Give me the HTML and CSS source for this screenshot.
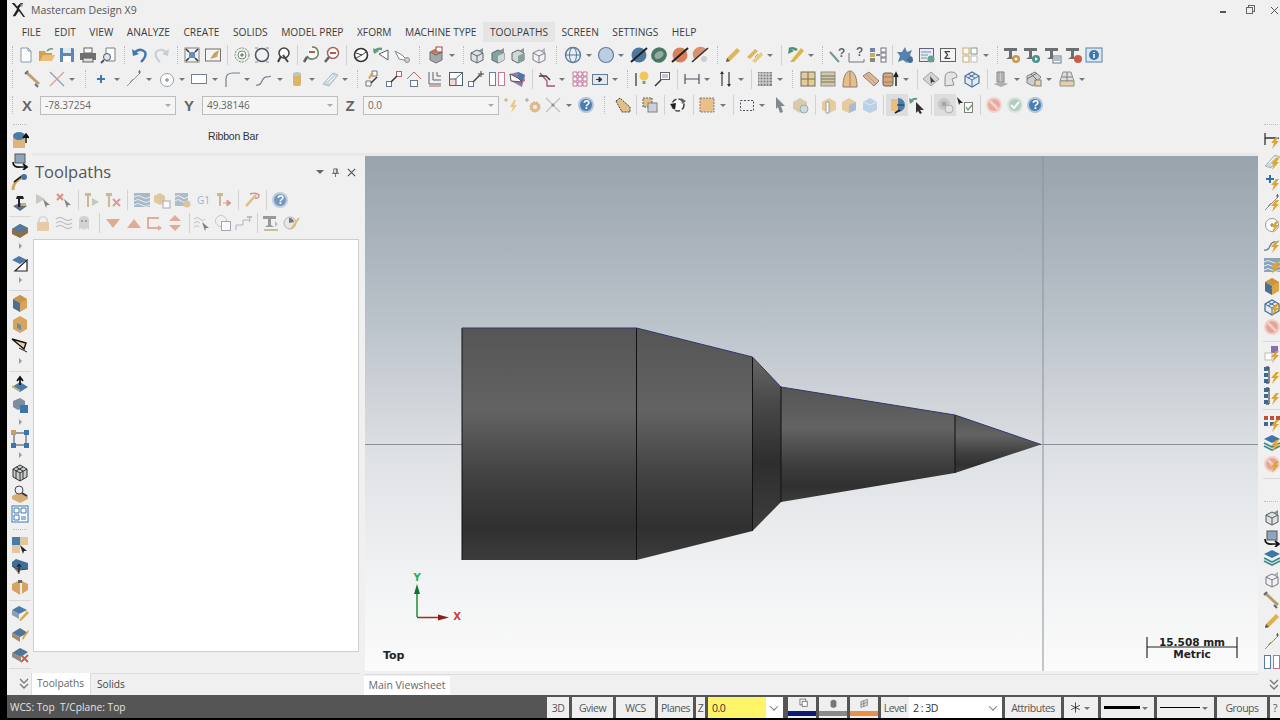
FILE: index.html
```html
<!DOCTYPE html>
<html lang="en">
<head>
    <meta charset="utf-8">
    <title>Mastercam Design X9</title>
    <link rel="stylesheet" href="styles.css">
</head>
<body>
<svg class="defs" aria-hidden="true">
    <symbol id="logo" viewBox="0 0 18 18"><path d="M2 1l6 7-5 8h3l4-6 5 7h2L10 7l5-6h-3L8 5 5 1z" fill="#222"/><path d="M11 3l3-2v5z" fill="#888"/></symbol>
    <symbol id="new" viewBox="0 0 18 18"><path d="M4 2h7l3 3v11H4z" fill="#fff" stroke="#7f93a6"/><path d="M11 2v3h3" fill="none" stroke="#7f93a6"/></symbol>
    <symbol id="open" viewBox="0 0 18 18"><path d="M1 5h6l1 2h6v8H1z" fill="#d19a45"/><path d="M2 15l3-6h12l-3 6z" fill="#eeb96b"/><path d="M9 5q3-3 6-2" fill="none" stroke="#5d9a6c" stroke-width="1.6"/></symbol>
    <symbol id="save" viewBox="0 0 18 18"><path d="M2 2h13l1 1v13H2z" fill="#4f7fb5"/><rect x="5" y="2" width="8" height="5" fill="#dfe8f2"/><rect x="5" y="10" width="8" height="6" fill="#fff"/></symbol>
    <symbol id="print" viewBox="0 0 18 18"><rect x="5" y="2" width="8" height="5" fill="#fff" stroke="#555"/><rect x="1" y="7" width="16" height="7" fill="#666"/><rect x="4" y="12" width="10" height="4" fill="#ddd" stroke="#555"/></symbol>
    <symbol id="prev" viewBox="0 0 18 18"><path d="M6 2h9v13H6z" fill="#fff" stroke="#777"/><circle cx="7" cy="11" r="3.5" fill="#dbe6ef" stroke="#445"/><path d="M4 14l-3 3" stroke="#445" stroke-width="2"/></symbol>
    <symbol id="undo" viewBox="0 0 18 18"><path d="M3 7q6-6 11-1 2 4-4 10" fill="none" stroke="#2f6fa8" stroke-width="2.4"/><path d="M1 3l1 7 6-2z" fill="#2f6fa8"/></symbol>
    <symbol id="redo" viewBox="0 0 18 18"><path d="M15 7q-6-6-11-1-2 4 4 10" fill="none" stroke="#c3ccd3" stroke-width="2"/><path d="M17 3l-1 7-6-2z" fill="#c3ccd3"/></symbol>
    <symbol id="fit" viewBox="0 0 18 18"><rect x="2" y="2" width="14" height="14" fill="#f2f2f2" stroke="#777"/><path d="M3 3l3 3M15 3l-3 3M3 15l3-3M15 15l-3-3" stroke="#222" stroke-width="1.500"/><rect x="6" y="6" width="6" height="6" fill="#5d86b0"/></symbol>
    <symbol id="zwin" viewBox="0 0 18 18"><rect x="1.500" y="3" width="15" height="12" fill="#f5f5f5" stroke="#666"/><path d="M6 13l4-6 5-3-2 7z" fill="#c89a55"/></symbol>
    <symbol id="ztar" viewBox="0 0 18 18"><circle cx="9" cy="9" r="7" fill="#eee" stroke="#777" stroke-dasharray="2 1"/><circle cx="9" cy="9" r="4" fill="#fff" stroke="#5a8a5a"/><path d="M7 9h4M9 7v4" stroke="#555"/></symbol>
    <symbol id="zcir" viewBox="0 0 18 18"><circle cx="9" cy="9" r="6.500" fill="#eef1f3" stroke="#445" stroke-width="1.500"/><path d="M2 2h3M13 2h3M2 16h3M13 16h3" stroke="#888"/></symbol>
    <symbol id="zarr" viewBox="0 0 18 18"><circle cx="10" cy="7" r="5" fill="#fff" stroke="#333" stroke-width="1.500"/><path d="M7 10l-3 6M9 9l5 7" stroke="#333" stroke-width="2"/></symbol>
    <symbol id="zout" viewBox="0 0 18 18"><path d="M10 1a6 6 0 1 1-5 9" fill="#fff" stroke="#557a55" stroke-width="1.500"/><path d="M7 6h6" stroke="#b0503c" stroke-width="2"/><path d="M5 11l-3 5" stroke="#555" stroke-width="2.500"/></symbol>
    <symbol id="zin" viewBox="0 0 18 18"><circle cx="10" cy="7" r="5.500" fill="#fff" stroke="#a05a50" stroke-width="1.500"/><path d="M7 7h6" stroke="#b0503c" stroke-width="2"/><path d="M6 11l-4 5" stroke="#555" stroke-width="2.500"/></symbol>
    <symbol id="rot" viewBox="0 0 18 18"><circle cx="9" cy="9" r="6.500" fill="#fff" stroke="#222" stroke-width="1.600"/><path d="M4 7l6 2-6 3M10 9l4-3" stroke="#333" fill="none"/></symbol>
    <symbol id="gback" viewBox="0 0 18 18"><path d="M16 4l-9 4 9 6z" fill="#fff" stroke="#456"/><path d="M2 6q3-4 8-3" fill="none" stroke="#4f9a78" stroke-width="2.500"/><path d="M1 2l1 6 5-3z" fill="#4f9a78"/></symbol>
    <symbol id="gnext" viewBox="0 0 18 18"><path d="M2 5l7 4 6 6-9-2z" fill="#fff" stroke="#68809a"/><circle cx="14" cy="14" r="2.500" fill="#ccc" stroke="#888"/></symbol>
    <symbol id="cubered" viewBox="0 0 18 18"><path d="M3 6l6-3 6 3v8l-6 3-6-3z" fill="#9ca3a3" stroke="#666"/><path d="M3 6l6 3 6-3" fill="none" stroke="#555"/><rect x="9" y="1" width="6" height="5" fill="#fff" stroke="#a33"/><path d="M3 6l6-3 2 2-4 3z" fill="#c96a44"/></symbol>
    <symbol id="cube1" viewBox="0 0 18 18"><path d="M3 7l6-3 6 3v7l-6 3-6-3z" fill="#dfe3e0" stroke="#556"/><path d="M3 7l6 3 6-3M9 10v7" fill="none" stroke="#556"/><path d="M10 5l5-3v4z" fill="#7b8f97"/></symbol>
    <symbol id="cube2" viewBox="0 0 18 18"><path d="M3 7l6-3 6 3v7l-6 3-6-3z" fill="#7d9c94" stroke="#556"/><path d="M9 10v7l6-3V7z" fill="#cfd8d4"/><path d="M10 5l5-3v4z" fill="#7b8f97"/></symbol>
    <symbol id="cube3" viewBox="0 0 18 18"><path d="M3 7l6-3 6 3v7l-6 3-6-3z" fill="#cfd8d4" stroke="#556"/><path d="M9 10v7l6-3V7z" fill="#7d9c94"/><path d="M10 5l5-3v4z" fill="#7b8f97"/></symbol>
    <symbol id="cube4" viewBox="0 0 18 18"><path d="M3 7l6-3 6 3v7l-6 3-6-3z" fill="#f2f2f2" stroke="#778"/><path d="M3 7l6 3 6-3M9 10v7" fill="none" stroke="#778"/><path d="M10 5l5-3v4z" fill="#a5b0b5"/></symbol>
    <symbol id="globe" viewBox="0 0 18 18"><circle cx="9" cy="9" r="7.500" fill="#e8edf3" stroke="#4d6f91" stroke-width="1.400"/><ellipse cx="9" cy="9" rx="3.500" ry="7.500" fill="none" stroke="#4d6f91"/><path d="M2 9h14" stroke="#4d6f91"/></symbol>
    <symbol id="sphere" viewBox="0 0 18 18"><circle cx="9" cy="9" r="7.500" fill="#b6cbe0" stroke="#55779a" stroke-width="1.200"/></symbol>
    <symbol id="pl1" viewBox="0 0 18 18"><circle cx="9" cy="9" r="7.500" fill="#3f6e9c"/><path d="M1 16L17 2" stroke="#111" stroke-width="2"/></symbol>
    <symbol id="pl2" viewBox="0 0 18 18"><ellipse cx="9" cy="9" rx="8" ry="7.500" fill="#3b6e5c" transform="rotate(-35 9 9)"/><ellipse cx="9" cy="9" rx="5" ry="3.500" fill="#8fa59a" transform="rotate(-35 9 9)"/></symbol>
    <symbol id="pl3" viewBox="0 0 18 18"><circle cx="9" cy="9" r="7.500" fill="#d5784f"/><path d="M1 16L17 2" stroke="#111" stroke-width="2"/></symbol>
    <symbol id="pl4" viewBox="0 0 18 18"><path d="M4 14A7.500 7.500 0 0 1 15 3z" fill="#d98a68"/><path d="M1 16L17 2" stroke="#222" stroke-width="1.600"/><circle cx="13" cy="13" r="3" fill="#ccc"/></symbol>
    <symbol id="pen" viewBox="0 0 18 18"><path d="M2 16l1-4L13 2l3 3L6 15z" fill="#dfb14d"/><path d="M2 16l1-4 3 3z" fill="#555"/></symbol>
    <symbol id="pens" viewBox="0 0 18 18"><path d="M1 11l8-8 3 2-8 8z" fill="#dfb14d"/><path d="M6 15l9-9 2 3-8 8z" fill="#e9c67c"/><path d="M9 11l3-3" stroke="#999"/></symbol>
    <symbol id="fix" viewBox="0 0 18 18"><path d="M3 16L14 2l3 3L7 16z" fill="#d9b13c"/><path d="M2 3q4-2 8 1" fill="none" stroke="#3f8a6a" stroke-width="2.500"/><path d="M1 8l1-6 5 3z" fill="#3f8a6a"/></symbol>
    <symbol id="chk" viewBox="0 0 18 18"><path d="M2 6l9 10" stroke="#66908a" stroke-width="2"/><text x="10" y="11" class="ictext">?</text></symbol>
    <symbol id="dimq" viewBox="0 0 18 18"><path d="M1 7v9h15V13" fill="none" stroke="#667"/><text x="8" y="10" class="ictext">?</text></symbol>
    <symbol id="flow" viewBox="0 0 18 18"><rect x="1" y="2" width="5" height="4" fill="#5d7fa5"/><rect x="1" y="7" width="5" height="4" fill="#c8a35a"/><rect x="1" y="12" width="5" height="4" fill="#77856f"/><rect x="12" y="2" width="5" height="4" fill="#fff" stroke="#667"/><rect x="12" y="7" width="5" height="4" fill="#fff" stroke="#667"/><rect x="12" y="12" width="5" height="4" fill="#fff" stroke="#667"/><path d="M7 9h4" stroke="#357" stroke-width="1.500"/></symbol>
    <symbol id="puzzle" viewBox="0 0 18 18"><path d="M9 1l2 5 5-2-2 5 3 3-5 1-1 4-4-3-5 2 2-6-3-4 5 0z" fill="#4a7aa8"/><circle cx="14" cy="14" r="3" fill="#38648e"/></symbol>
    <symbol id="listr" viewBox="0 0 18 18"><rect x="1.500" y="2.500" width="14" height="13" fill="#e6edf2" stroke="#557"/><path d="M3 6h10M3 9h7M3 12h6" stroke="#6f8aa0"/><circle cx="13" cy="13" r="3.500" fill="#5e9a92"/></symbol>
    <symbol id="sigma" viewBox="0 0 18 18"><rect x="1.500" y="2.500" width="15" height="13" fill="#f5f5f5" stroke="#555"/><text x="5" y="13" class="ictext sig">Σ</text></symbol>
    <symbol id="grid4" viewBox="0 0 18 18"><rect x="2" y="2" width="6" height="6" fill="#fff" stroke="#c9a45e"/><rect x="10" y="2" width="6" height="6" fill="#fff" stroke="#7b9a7b"/><rect x="2" y="10" width="6" height="6" fill="#fff" stroke="#c9a45e"/><rect x="10" y="10" width="6" height="6" fill="#fff" stroke="#bbb"/></symbol>
    <symbol id="mac1" viewBox="0 0 18 18"><path d="M1 2h13v3H9v6l3 2H3l3-2V5H1z" fill="#5f6668"/><circle cx="13" cy="13" r="4" fill="#c88f3f"/><circle cx="13" cy="13" r="1.500" fill="#fff"/></symbol>
    <symbol id="mac2" viewBox="0 0 18 18"><path d="M1 2h13v3H9v6l3 2H3l3-2V5H1z" fill="#5f6668"/><circle cx="13" cy="13" r="4" fill="#3e8a82"/><path d="M12 11l3 2-3 2z" fill="#fff"/></symbol>
    <symbol id="mac3" viewBox="0 0 18 18"><path d="M1 2h13v3H9v6l3 2H3l3-2V5H1z" fill="#5f6668"/><rect x="9" y="10" width="8" height="7" fill="#fff" stroke="#5a7088"/><path d="M10 12h6M10 14h6" stroke="#5a7088"/></symbol>
    <symbol id="mac4" viewBox="0 0 18 18"><path d="M1 2h13v3H9v6l3 2H3l3-2V5H1z" fill="#5f6668"/><circle cx="13" cy="13" r="4" fill="#c9503a"/></symbol>
    <symbol id="info" viewBox="0 0 18 18"><rect x="1" y="2" width="16" height="14" fill="#dbe7f0" stroke="#4a7aa0"/><circle cx="9" cy="9" r="5" fill="#2f6ea5"/><path d="M9 8v4M9 6v1" stroke="#fff" stroke-width="1.500"/></symbol>

    <symbol id="wrench" viewBox="0 0 18 18"><path d="M2 2l13 12" stroke="#b59a6e" stroke-width="3"/><path d="M1 4l3-3M11 14l3 3" stroke="#666" stroke-width="2"/></symbol>
    <symbol id="xcut" viewBox="0 0 18 18"><path d="M2 2l14 14" stroke="#8a97a5" stroke-width="1.300"/><path d="M2 16L16 2" stroke="#d49a8c" stroke-width="1.300"/></symbol>
    <symbol id="plus" viewBox="0 0 18 18"><path d="M5 9h8M9 5v8" stroke="#2f6fa8" stroke-width="2"/></symbol>
    <symbol id="line" viewBox="0 0 18 18"><path d="M2 16L14 4" stroke="#8a8f95"/><path d="M5 12l3-3" stroke="#a0b060"/><path d="M13 2h3M14.500 0v4" stroke="#666"/></symbol>
    <symbol id="circ" viewBox="0 0 18 18"><circle cx="9" cy="10" r="6.500" fill="#fff" stroke="#8a9aa8"/><path d="M7 10h4M9 8v4" stroke="#777"/></symbol>
    <symbol id="rect" viewBox="0 0 18 18"><rect x="1.500" y="4.500" width="15" height="9" fill="#fff" stroke="#66788a"/></symbol>
    <symbol id="fil" viewBox="0 0 18 18"><path d="M3 17V9q0-6 7-6h7" fill="none" stroke="#66788a" stroke-width="1.200"/></symbol>
    <symbol id="spl" viewBox="0 0 18 18"><path d="M1 15q4 1 6-4t6-4l3-1" fill="none" stroke="#66788a" stroke-width="1.200"/></symbol>
    <symbol id="cyl" viewBox="0 0 18 18"><rect x="5" y="3" width="8" height="13" rx="2" fill="#dcb15c"/><ellipse cx="9" cy="4" rx="4" ry="2" fill="#b8c2c8"/></symbol>
    <symbol id="surf" viewBox="0 0 18 18"><path d="M2 14L12 3l5 2-9 11z" fill="#cdd7dd" stroke="#a9b4bb"/><path d="M6 11l6-6M8 13l6-6" stroke="#fff"/></symbol>
    <symbol id="ws1" viewBox="0 0 18 18"><path d="M8 1h5v5H8zM2 11h5v5H2z" fill="#fff" stroke="#667"/><path d="M4 8l3-5h3L6 9z" fill="#dfa33a"/><path d="M7 13l6-6" stroke="#222" stroke-width="1.500"/></symbol>
    <symbol id="ws2" viewBox="0 0 18 18"><rect x="1.500" y="11.500" width="5" height="5" fill="#fff" stroke="#5a7088"/><rect x="11.500" y="1.500" width="5" height="5" fill="#fff" stroke="#b05a5a"/><path d="M6 12l6-6" stroke="#222" stroke-width="1.500"/></symbol>
    <symbol id="ws3" viewBox="0 0 18 18"><path d="M2 9l7-7 7 7" fill="none" stroke="#b05a5a"/><rect x="5.500" y="10.500" width="7" height="6" fill="#fff" stroke="#5a7088"/></symbol>
    <symbol id="ws4" viewBox="0 0 18 18"><path d="M3 2v12h12M7 2v8h8M11 2v4h4" fill="none" stroke="#556"/><path d="M3 16h12" stroke="#b05a5a"/></symbol>
    <symbol id="scale" viewBox="0 0 18 18"><rect x="2.500" y="2.500" width="13" height="13" fill="#fff" stroke="#456"/><path d="M2 15L15 3" stroke="#456"/><rect x="2.500" y="9" width="6.500" height="6.500" fill="#f4d9d4" stroke="#456"/></symbol>
    <symbol id="grow" viewBox="0 0 18 18"><rect x="1.500" y="11.500" width="5" height="5" fill="#fff" stroke="#5a7088"/><path d="M6 12l7-7" stroke="#333" stroke-width="1.500"/><path d="M14 1v6M11 4h6" stroke="#333"/></symbol>
    <symbol id="two" viewBox="0 0 18 18"><rect x="1.500" y="2.500" width="6" height="13" fill="#fff" stroke="#5a7aa0"/><rect x="10.500" y="2.500" width="6" height="13" fill="#fff" stroke="#c07090"/></symbol>
    <symbol id="cube3d" viewBox="0 0 18 18"><path d="M2 4l8-2 7 3-3 12-11-6z" fill="#8e6f9e"/><path d="M10 2l7 3-3 7-4-4z" fill="#3d6fa5"/><path d="M2 4l8 4 4 4-11-1z" fill="#fff" stroke="#444"/><path d="M14 12l2-6 1 5z" fill="#d04a6a"/></symbol>
    <symbol id="angle" viewBox="0 0 18 18"><path d="M2 3l7 8v5h8" fill="none" stroke="#9c4a7a" stroke-width="1.300"/><path d="M1 6h7l4 4" fill="none" stroke="#333" stroke-width="1.500"/></symbol>
    <symbol id="dots9" viewBox="0 0 18 18"><path d="M2 2h4v4H2zM7 2h4v4H7zM12 2h4v4h-4zM2 7h4v4H2zM7 7h4v4H7zM12 7h4v4h-4zM2 12h4v4H2zM7 12h4v4H7zM12 12h4v4h-4z" fill="#fff" stroke="#c06a9a"/></symbol>
    <symbol id="boxar" viewBox="0 0 18 18"><rect x="1.500" y="4.500" width="15" height="10" fill="#e3e8ee" stroke="#5a7088"/><path d="M5 9.500h5M8 7l3 2.500L8 12z" stroke="#222" fill="#222"/></symbol>
    <symbol id="bulb" viewBox="0 0 18 18"><path d="M3 3v13" stroke="#445" stroke-width="1.500"/><circle cx="11" cy="6" r="4.500" fill="#f0c44c"/><rect x="9.500" y="11" width="3" height="3" fill="#888"/></symbol>
    <symbol id="note" viewBox="0 0 18 18"><rect x="7.500" y="2.500" width="9" height="7" fill="#fff" stroke="#556"/><path d="M9 5h6M9 7h6" stroke="#889"/><path d="M2 16l6-6" stroke="#222" stroke-width="1.500"/></symbol>
    <symbol id="dimh" viewBox="0 0 18 18"><path d="M2 4v10M16 4v10M2 9h14" stroke="#445" stroke-width="1.200"/></symbol>
    <symbol id="dimv" viewBox="0 0 18 18"><path d="M5 2v14M12 2v14" stroke="#445" stroke-width="1.400"/><path d="M3 4l2-3 2 3M10 14l2 3 2-3" fill="#222"/></symbol>
    <symbol id="hatch" viewBox="0 0 18 18"><rect x="2" y="2" width="14" height="14" fill="#777"/><path d="M2 4h14M2 7h14M2 10h14M2 13h14M4 2v14M7 2v14M10 2v14M13 2v14" stroke="#ddd"/></symbol>
    <symbol id="wf1" viewBox="0 0 18 18"><rect x="2" y="2" width="14" height="14" fill="#e8c88a" stroke="#666"/><path d="M9 2v14M2 9h14" stroke="#666"/></symbol>
    <symbol id="wf2" viewBox="0 0 18 18"><rect x="2" y="2" width="14" height="14" fill="#d2c59c" stroke="#888"/><path d="M2 6h14M2 9h14M2 12h14" stroke="#666"/></symbol>
    <symbol id="dome" viewBox="0 0 18 18"><path d="M2 17C2 7 5 1 9 1s7 6 7 16z" fill="#e8bc7e" stroke="#777"/><path d="M9 1v16" stroke="#a67"/></symbol>
    <symbol id="tile" viewBox="0 0 18 18"><path d="M1 6l6-4 10 9-5 5z" fill="#dfb57c" stroke="#777"/><path d="M4 4l10 10" stroke="#b89"/></symbol>
    <symbol id="cylup" viewBox="0 0 18 18"><rect x="1" y="3" width="10" height="13" rx="2" fill="#dda068" stroke="#555"/><path d="M1 7h10M1 12h10" stroke="#777"/><path d="M14 16V5M12 7l2-4 2 4" stroke="#111" stroke-width="1.500"/></symbol>
    <symbol id="sel1" viewBox="0 0 18 18"><path d="M1 9l8-7 8 7-8 7z" fill="#cfd3d6" stroke="#999"/><path d="M8 6l5 6-3 0-1 2z" fill="#333"/></symbol>
    <symbol id="sel2" viewBox="0 0 18 18"><path d="M3 16V8q0-6 6-6 6 0 6 5l-5 2 2 6z" fill="#e3e3e3" stroke="#888"/></symbol>
    <symbol id="mesh" viewBox="0 0 18 18"><path d="M2 6l7-4 7 4v7l-7 4-7-4z" fill="#e2ebf3" stroke="#3f6a92" stroke-width="1.200"/><path d="M2 6l7 4 7-4M9 10v7M5 4l7 4M12 4L5 8" fill="none" stroke="#3f6a92"/></symbol>
    <symbol id="tow1" viewBox="0 0 18 18"><path d="M5 2h7v10H5z" fill="#ccc" stroke="#777"/><path d="M7 2v10M10 2v10" stroke="#888"/><path d="M2 14l7-3 7 3-7 3z" fill="#aaa"/></symbol>
    <symbol id="tow2" viewBox="0 0 18 18"><path d="M2 6l8-4 6 5-8 9-6-3z" fill="#ccc" stroke="#777"/><path d="M6 4l6 6M2 9l10-6" stroke="#666"/><rect x="10" y="10" width="6" height="6" fill="#e5d5a5" stroke="#777"/></symbol>
    <symbol id="tow3" viewBox="0 0 18 18"><path d="M5 2h8l3 9H2z" fill="#ddd" stroke="#888"/><path d="M2 11h14v5H2z" fill="#e4cfa2" stroke="#888"/><path d="M9 2v9M4 7h10" stroke="#777"/></symbol>

    <symbol id="boltp" viewBox="0 0 18 18"><path d="M1 4h4M3 2v4" stroke="#c8a35a"/><path d="M11 4l-4 7h3l-2 6 6-8h-3l2-5z" fill="#e8c47c"/></symbol>
    <symbol id="cogp" viewBox="0 0 18 18"><path d="M1 4h4M3 2v4" stroke="#999"/><circle cx="11" cy="11" r="5" fill="#e0b880" stroke="#cda56a" stroke-dasharray="2 1"/><circle cx="11" cy="11" r="2" fill="#f0f0f0"/></symbol>
    <symbol id="xstar" viewBox="0 0 18 18"><path d="M2 2l14 14M2 16L16 2" stroke="#bbb" stroke-width="1.200"/><circle cx="9" cy="9" r="1.500" fill="#888"/></symbol>
    <symbol id="help" viewBox="0 0 18 18"><circle cx="9" cy="9" r="8" fill="#a9c2da"/><circle cx="9" cy="9" r="6" fill="#3d74ab"/><text x="6" y="13" class="ictext hw">?</text></symbol>
    <symbol id="sbox" viewBox="0 0 18 18"><path d="M2 5l4-3 10 9v5H8z" fill="#e0bc7d" stroke="#333" stroke-dasharray="2 1"/></symbol>
    <symbol id="stack" viewBox="0 0 18 18"><rect x="2" y="2" width="9" height="9" fill="#e0bc7d" stroke="#555" stroke-dasharray="2 1"/><rect x="7" y="7" width="9" height="9" fill="#ccd" stroke="#777"/></symbol>
    <symbol id="swap" viewBox="0 0 18 18"><circle cx="9" cy="9" r="6" fill="#fff" stroke="#333" stroke-width="1.500" stroke-dasharray="5 2"/><path d="M1 8l6-1-1 7z" fill="#111"/><path d="M12 2l5 3-4 3z" fill="#555"/></symbol>
    <symbol id="dots" viewBox="0 0 18 18"><rect x="2" y="2" width="14" height="14" fill="#e9bd80" stroke="#777" stroke-dasharray="2 1"/></symbol>
    <symbol id="dashr" viewBox="0 0 18 18"><rect x="2.500" y="4.500" width="13" height="10" fill="none" stroke="#445" stroke-dasharray="2 1.500"/></symbol>
    <symbol id="arrow" viewBox="0 0 18 18"><path d="M5 1l9 9-4 0 2 6-3 1-2-6-2 2z" fill="#78808a"/></symbol>
    <symbol id="dimbox" viewBox="0 0 18 18"><path d="M2 6l7-4 7 4v7l-7 4-7-4z" fill="#d8c8a5"/><circle cx="13" cy="13" r="4" fill="#cfd8dc" stroke="#8aa"/></symbol>
    <symbol id="hbox1" viewBox="0 0 18 18"><path d="M2 6l7-4 7 4v8l-7 3-7-3z" fill="#e5c897"/><path d="M6 6h3v11H6z" fill="#fff" stroke="#999"/></symbol>
    <symbol id="hbox2" viewBox="0 0 18 18"><path d="M2 6l7-4 7 4v8l-7 3-7-3z" fill="#e5c897"/><path d="M9 9l7-3v8l-7 3z" fill="#a7b7cf"/></symbol>
    <symbol id="hbox3" viewBox="0 0 18 18"><path d="M2 6l7-4 7 4v8l-7 3-7-3z" fill="#b6d0e6"/><path d="M2 6l7 3 7-3" fill="none" stroke="#d8e6f2"/></symbol>
    <symbol id="half" viewBox="0 0 18 18"><rect x="3" y="3" width="7" height="12" fill="#e8bc70"/><path d="M10 2a7 7 0 0 1 0 14z" fill="#3f74a8"/><path d="M9 9h7" stroke="#222"/><path d="M7 17l5-3" stroke="#111" stroke-width="2"/></symbol>
    <symbol id="bkarr" viewBox="0 0 18 18"><path d="M2 6q3-4 7-3" fill="none" stroke="#4f9a78" stroke-width="2"/><path d="M1 2l1 6 4-3z" fill="#4f9a78"/><path d="M8 6l8 8-4 0 2 3-2 1-2-3-2 2z" fill="#222"/></symbol>
    <symbol id="target" viewBox="0 0 18 18"><circle cx="8" cy="8" r="6" fill="#c4c4c4"/><circle cx="8" cy="8" r="2.500" fill="#a0a0a0"/><circle cx="13" cy="13" r="4" fill="#e4e4e4" stroke="#aaa"/></symbol>
    <symbol id="clip" viewBox="0 0 18 18"><path d="M1 1l6 6-3 0-1 2z" fill="#111"/><rect x="8.500" y="6.500" width="8" height="10" fill="#fff" stroke="#777"/><path d="M10 11l2 3 4-5" stroke="#5c8f5c" fill="none" stroke-width="1.300"/></symbol>
    <symbol id="stop" viewBox="0 0 18 18"><circle cx="9" cy="9" r="8" fill="#f1d2ca"/><circle cx="9" cy="9" r="6" fill="#e8a595"/><path d="M5 5l8 8" stroke="#f5d0c8" stroke-width="2.500"/></symbol>
    <symbol id="ok" viewBox="0 0 18 18"><circle cx="9" cy="9" r="8" fill="#d6e4de"/><circle cx="9" cy="9" r="6" fill="#adc9bc"/><path d="M5 9l3 3 5-6" fill="none" stroke="#fff" stroke-width="2"/></symbol>

    <symbol id="tplay" viewBox="0 0 18 18"><path d="M2 3l9 5-9 5z" fill="#b2bcae"/><path d="M9 8l7 6-3 0-1 3z" fill="#555"/></symbol>
    <symbol id="tx" viewBox="0 0 18 18"><path d="M2 3l6 6M8 3L2 9" stroke="#d06a58" stroke-width="2"/><path d="M9 8l7 6-3 0-1 3z" fill="#555"/></symbol>
    <symbol id="ttool" viewBox="0 0 18 18"><path d="M2 2h6v3H6v11H4V5H2z" fill="#b9a36e"/><path d="M9 7l7 4-7 4z" fill="#a7c0a0"/></symbol>
    <symbol id="ttoolx" viewBox="0 0 18 18"><path d="M2 2h6v3H6v11H4V5H2z" fill="#b9a36e"/><path d="M9 8l7 7M16 8l-7 7" stroke="#d27a68" stroke-width="2"/></symbol>
    <symbol id="wave" viewBox="0 0 18 18"><rect x="1" y="2" width="16" height="14" fill="#8ba3b8"/><path d="M1 6q4-3 8 0t8 0M1 10q4-3 8 0t8 0M1 14q4-3 8 0t8 0" fill="none" stroke="#e6edf3"/></symbol>
    <symbol id="tcube" viewBox="0 0 18 18"><path d="M1 5l6-3 5 3v6l-5 3-6-3z" fill="#d9b77e"/><rect x="10" y="10" width="7" height="7" fill="#fff" stroke="#889"/></symbol>
    <symbol id="wavec" viewBox="0 0 18 18"><rect x="1" y="2" width="13" height="13" fill="#94a8ba"/><path d="M1 6q3-3 6 0t7 0M1 10q3-3 6 0t7 0" fill="none" stroke="#eef"/><circle cx="13" cy="13" r="3.500" fill="#d6b27a"/></symbol>
    <symbol id="tool2" viewBox="0 0 18 18"><path d="M2 2h6v3H6v10H4V5H2z" fill="#b9a36e"/><path d="M8 12h7M12 9l4 3-4 3z" fill="#d1745e" stroke="#d1745e"/></symbol>
    <symbol id="hook" viewBox="0 0 18 18"><path d="M3 15L13 4" stroke="#dba945" stroke-width="2.500"/><path d="M7 3q6-2 9 1 0 4-4 3" fill="none" stroke="#c26a6a" stroke-width="1.500"/></symbol>
    <symbol id="lock" viewBox="0 0 18 18"><rect x="3" y="8" width="12" height="9" rx="1" fill="#e3be88"/><path d="M5 8V5q4-5 8 0v3" fill="none" stroke="#d1d1d1" stroke-width="2"/></symbol>
    <symbol id="waves" viewBox="0 0 18 18"><path d="M1 5q4-3 8 0t8 0M1 9q4-3 8 0t8 0M1 13q4-3 8 0t8 0" fill="none" stroke="#aab3ba" stroke-width="1.300"/></symbol>
    <symbol id="ghost" viewBox="0 0 18 18"><path d="M4 16V6q0-4 5-4t5 4v10l-2-2-3 2-3-2z" fill="#c5c9c9"/><circle cx="7" cy="7" r="1" fill="#666"/><circle cx="11" cy="7" r="1" fill="#666"/></symbol>
    <symbol id="tridn" viewBox="0 0 18 18"><path d="M2 5h14l-7 9z" fill="#dc8f76"/></symbol>
    <symbol id="triup" viewBox="0 0 18 18"><path d="M2 14h14L9 5z" fill="#dc8f76"/></symbol>
    <symbol id="loop" viewBox="0 0 18 18"><path d="M14 4H3v10h11" fill="none" stroke="#d99278" stroke-width="2"/><path d="M13 11l4 3-4 3z" fill="#d99278"/></symbol>
    <symbol id="updn" viewBox="0 0 18 18"><path d="M3 7l6-6 6 6zM3 11l6 6 6-6z" fill="#dc8f76"/></symbol>
    <symbol id="wavar" viewBox="0 0 18 18"><path d="M1 5q3-3 6 0t5 0M1 9q3-3 6 0M1 13q3-3 5 0" fill="none" stroke="#aab"/><path d="M9 8l7 6-3 0-1 3z" fill="#555"/></symbol>
    <symbol id="cbox" viewBox="0 0 18 18"><circle cx="7" cy="7" r="5.500" fill="none" stroke="#d8ab88"/><rect x="7.500" y="7.500" width="9" height="9" fill="#fff" stroke="#889"/></symbol>
    <symbol id="step" viewBox="0 0 18 18"><path d="M1 16v-5h7V6h8" fill="none" stroke="#99a"/><path d="M12 2h5v2h-2v4h-1V4h-2z" fill="#aa9"/></symbol>
    <symbol id="macb" viewBox="0 0 18 18"><path d="M1 2h13v3H9v6l3 2H3l3-2V5H1z" fill="#70777a"/><path d="M2 15h14v2H2z" fill="#b9a878"/><path d="M13 7l3 3-3 3z" fill="#aab"/></symbol>
    <symbol id="ball" viewBox="0 0 18 18"><circle cx="7" cy="9" r="6" fill="#e4e4e4" stroke="#999"/><path d="M6 4a5 5 0 0 1 5 4l-5 1z" fill="#444"/><path d="M8 15L16 4" stroke="#dba945" stroke-width="2"/></symbol>

    <symbol id="lboxup" viewBox="0 0 18 18"><rect x="2" y="6" width="12" height="11" fill="#dcb47c"/><ellipse cx="8" cy="5" rx="6" ry="4" fill="#4a7ba8"/><path d="M15 12V4M12 7l3-4 3 4" stroke="#111" stroke-width="1.400"/></symbol>
    <symbol id="lrot" viewBox="0 0 18 18"><rect x="4" y="2" width="10" height="9" fill="#90a5bb" stroke="#556"/><path d="M2 10q0 6 8 5h5M12 12l4 3-4 3" fill="none" stroke="#111" stroke-width="1.700"/></symbol>
    <symbol id="lsweep" viewBox="0 0 18 18"><path d="M2 17q0-8 8-12" fill="none" stroke="#d1a45e" stroke-width="3"/><path d="M3 9l8-6" stroke="#222" stroke-width="1.600"/><circle cx="13" cy="4" r="3" fill="#3f74a8"/></symbol>
    <symbol id="ltool" viewBox="0 0 18 18"><path d="M2 12l7-3 7 3-7 5z" fill="#5c6f83"/><path d="M6 2h6l1 3H9v8H7V5H5z" fill="#222"/><rect x="10" y="9" width="5" height="3" fill="#d6a967"/></symbol>
    <symbol id="lbox" viewBox="0 0 18 18"><path d="M1 8l8-5 8 4v5l-8 5-8-4z" fill="#8a6f4c"/><path d="M1 8l8-5 8 4-8 4z" fill="#4d7aa3"/></symbol>
    <symbol id="ldraft" viewBox="0 0 18 18"><path d="M1 6l7-4 8 4-7 4z" fill="#4d7aa3"/><path d="M4 17L16 6v11z" fill="#fff" stroke="#222" stroke-width="1.200"/></symbol>
    <symbol id="lcube" viewBox="0 0 18 18"><path d="M2 5l7-4 7 4v9l-7 4-7-4z" fill="#d6a45c"/><path d="M2 5v9l7 4V9z" fill="#4a6f94"/><path d="M2 5l7-4 7 4-7 4z" fill="#c69648"/></symbol>
    <symbol id="lcube2" viewBox="0 0 18 18"><path d="M2 5l7-4 7 4v9l-7 4-7-4z" fill="#d6a45c"/><path d="M6 8l4 2v5l-4-2z" fill="#6a8aa8"/></symbol>
    <symbol id="lplate" viewBox="0 0 18 18"><path d="M1 3l14 4-2 6z" fill="#e5d0a0" stroke="#111" stroke-width="1.400"/><path d="M8 12l8 4" stroke="#222"/></symbol>
    <symbol id="lup" viewBox="0 0 18 18"><path d="M1 12l8-5 8 5-8 5z" fill="#4a7ba8"/><path d="M1 12l8 5v-2l-8-5z" fill="#d5ac72"/><path d="M9 10V3M6 6l3-4 3 4" stroke="#111" stroke-width="1.700" fill="none"/></symbol>
    <symbol id="lbb" viewBox="0 0 18 18"><path d="M2 5l7-3 5 3v6l-7 3-5-3z" fill="#7c8e9f"/><rect x="9" y="9" width="8" height="8" fill="#3b75ad"/></symbol>
    <symbol id="lframe" viewBox="0 0 18 18"><path d="M3 3h12v12H3z" fill="none" stroke="#445"/><rect x="0" y="0" width="5" height="5" fill="#c0a070"/><rect x="13" y="0" width="5" height="5" fill="#3b75ad"/><rect x="0" y="13" width="5" height="5" fill="#3b75ad"/><rect x="13" y="13" width="5" height="5" fill="#3b75ad"/></symbol>
    <symbol id="lmesh" viewBox="0 0 18 18"><path d="M2 5l7-4 7 4v8l-7 4-7-4z" fill="#c9cccc" stroke="#333"/><path d="M2 5l7 4 7-4M9 9v8M5 3l7 4v8M12 3L5 7v8" fill="none" stroke="#333"/></symbol>
    <symbol id="lmag" viewBox="0 0 18 18"><path d="M1 11l8-4 8 4v3l-8 4-8-4z" fill="#d5ac72"/><circle cx="8" cy="5" r="4" fill="#eef" stroke="#445"/><path d="M11 8l5 3" stroke="#333" stroke-width="2"/></symbol>
    <symbol id="lview" viewBox="0 0 18 18"><rect x="1" y="1" width="16" height="16" fill="#fff" stroke="#3b75ad"/><path d="M3 3h5v5H3zM10 3h5v5h-5zM3 10h5v5H3z" fill="none" stroke="#3b75ad"/><path d="M10 12h5M10 14h5" stroke="#3b75ad"/></symbol>
    <symbol id="lchk" viewBox="0 0 18 18"><rect x="1" y="1" width="8" height="8" fill="#4a7ba8"/><rect x="9" y="1" width="8" height="8" fill="#e0c79c"/><rect x="1" y="9" width="8" height="8" fill="#e0c79c"/><path d="M9 9l7 6-3 0-1 3z" fill="#222"/></symbol>
    <symbol id="lroof" viewBox="0 0 18 18"><path d="M1 5l4-3 12 4v6l-9 1-7-4z" fill="#3e6f9c"/><path d="M1 9l7 4v4M8 13l9-1" fill="#8a7a60" stroke="#445"/><path d="M8 15V8M6 10l2-3 2 3" stroke="#111" fill="none"/></symbol>
    <symbol id="lsplit" viewBox="0 0 18 18"><path d="M1 6l8-4 8 4v6l-8 5-8-5z" fill="#d6a45c"/><path d="M10 4v13" stroke="#eee" stroke-width="2"/><path d="M7 2h4v3H7z" fill="#666"/></symbol>
    <symbol id="lpen" viewBox="0 0 18 18"><path d="M1 6l7-4 8 4-8 4z" fill="#4a7ba8"/><path d="M1 6v5l7 4V10z" fill="#8b9fb2"/><path d="M8 16l8-9 2 2-8 8z" fill="#d9ab44"/></symbol>
    <symbol id="lpen2" viewBox="0 0 18 18"><path d="M1 8l8-5 8 5-8 4z" fill="#4f7598"/><path d="M1 8v4l8 5v-5z" fill="#a08d6c"/><path d="M11 13l6-8 1 1-6 9z" fill="#d9ab44"/></symbol>
    <symbol id="lbx" viewBox="0 0 18 18"><path d="M1 7l8-5 8 4-7 5z" fill="#4f7598"/><path d="M1 7v4l9 5V11z" fill="#97887a"/><path d="M10 9l7 7M17 9l-7 7" stroke="#cf5a48" stroke-width="1.800"/></symbol>

    <symbol id="bolt" viewBox="0 0 18 18"><path d="M13 6l-5 6h3l-2 6 7-8h-3l3-4z" fill="#dfa52e"/></symbol>
    <symbol id="rd" viewBox="0 0 18 18"><path d="M2 2v12M2 7h14" stroke="#333" stroke-width="1.300"/></symbol>
    <symbol id="rp" viewBox="0 0 18 18"><path d="M3 6h8M7 2v8" stroke="#2f6fa8" stroke-width="2"/></symbol>
    <symbol id="rs" viewBox="0 0 18 18"><rect x="8" y="1" width="7" height="7" fill="#8a6fa8"/><rect x="2" y="8" width="7" height="7" fill="#fff" stroke="#bbb"/></symbol>
    <symbol id="rl" viewBox="0 0 18 18"><path d="M3 1h3v16H3M3 3h3" fill="none" stroke="#223"/><rect x="1" y="1" width="4" height="4" fill="#3b6a99"/><rect x="1" y="7" width="4" height="4" fill="#3b6a99"/><rect x="1" y="13" width="4" height="4" fill="#3b6a99"/></symbol>
    <symbol id="rg" viewBox="0 0 18 18"><path d="M1 2h4v4H1zM7 2h4v4H7zM13 2h4v4h-4z" fill="#c0503c"/><path d="M1 8h4v4H1zM7 8h4v4H7z" fill="#3b6a99"/></symbol>
    <symbol id="rlay" viewBox="0 0 18 18"><path d="M1 5l8-4 8 4-8 4z" fill="#3f74a8"/><path d="M1 9l8 4 8-4M1 12l8 4 8-4" fill="none" stroke="#3f8a8a" stroke-width="1.800"/></symbol>
    <symbol id="chev" viewBox="0 0 18 18"><path d="M5 5l4 4 4-4M5 10l4 4 4-4" fill="none" stroke="#777" stroke-width="1.300"/></symbol>
    <symbol id="starw" viewBox="0 0 18 18"><path d="M9 2v14M3 6l12 6M3 12l12-6" stroke="#111"/></symbol>
    <symbol id="pgb" viewBox="0 0 18 18"><rect x="5.500" y="1.500" width="8" height="8" fill="#fff" stroke="#556"/><rect x="8.500" y="4.500" width="7" height="7" fill="#fff" stroke="#556"/></symbol>
    <symbol id="pgc" viewBox="0 0 18 18"><path d="M5 4l4-2 4 2v8l-4 2-4-2z" fill="#777"/></symbol>
    <symbol id="pgd" viewBox="0 0 18 18"><path d="M4 5l9-3v8l-9 3z" fill="#ddd" stroke="#777"/><path d="M8 4v8M4 9l9-3" stroke="#777"/></symbol>
</svg>

<div class="window">
    <header class="titlebar">
        <svg class="logo"><use href="#logo"/></svg>
        <span class="title">Mastercam Design X9</span>
        <div class="winbtns">
            <i class="wmin"></i>
            <i class="wmax"></i>
            <svg class="wclose" viewBox="0 0 10 10"><path d="M1 1l8 8M9 1L1 9" stroke="#444"/></svg>
        </div>
    </header>

    <nav class="menu">
        <a>FILE</a><a>EDIT</a><a>VIEW</a><a>ANALYZE</a><a>CREATE</a><a>SOLIDS</a><a>MODEL PREP</a><a>XFORM</a><a>MACHINE TYPE</a><a class="active">TOOLPATHS</a><a>SCREEN</a><a>SETTINGS</a><a>HELP</a>
    </nav>

    <div class="row">
        <i class="grip w9"></i>
        <svg class="ic"><use href="#new"/></svg><svg class="ic"><use href="#open"/></svg><svg class="ic"><use href="#save"/></svg><svg class="ic"><use href="#print"/></svg><svg class="ic"><use href="#prev"/></svg>
        <i class="grip w11"></i>
        <svg class="ic"><use href="#undo"/></svg><svg class="ic"><use href="#redo"/></svg>
        <i class="grip w11"></i>
        <svg class="ic"><use href="#fit"/></svg><svg class="ic"><use href="#zwin"/></svg>
        <i class="sep w8"></i>
        <svg class="ic"><use href="#ztar"/></svg><svg class="ic"><use href="#zcir"/></svg><svg class="ic"><use href="#zarr"/></svg>
        <i class="sep w8"></i>
        <svg class="ic"><use href="#zout"/></svg><svg class="ic"><use href="#zin"/></svg>
        <i class="sep w8"></i>
        <svg class="ic"><use href="#rot"/></svg><svg class="ic"><use href="#gback"/></svg><svg class="ic"><use href="#gnext"/></svg>
        <i class="grip w14"></i>
        <svg class="ic"><use href="#cubered"/></svg><i class="dd"></i>
        <i class="grip w8"></i>
        <svg class="ic"><use href="#cube1"/></svg><svg class="ic"><use href="#cube2"/></svg><svg class="ic"><use href="#cube3"/></svg><svg class="ic"><use href="#cube4"/></svg>
        <i class="grip w14"></i>
        <svg class="ic"><use href="#globe"/></svg><i class="dd"></i>
        <svg class="ic"><use href="#sphere"/></svg><i class="dd"></i>
        <svg class="ic"><use href="#pl1"/></svg><svg class="ic"><use href="#pl2"/></svg><svg class="ic"><use href="#pl3"/></svg><svg class="ic"><use href="#pl4"/></svg>
        <i class="grip w12"></i>
        <svg class="ic"><use href="#pen"/></svg><i class="w1"></i><svg class="ic"><use href="#pens"/></svg><i class="dd"></i>
        <i class="sep w9"></i>
        <svg class="ic"><use href="#fix"/></svg><i class="dd"></i>
        <i class="grip w8"></i>
        <svg class="ic"><use href="#chk"/></svg><svg class="ic"><use href="#dimq"/></svg><svg class="ic"><use href="#flow"/></svg>
        <i class="sep w7"></i>
        <svg class="ic"><use href="#puzzle"/></svg><i class="w1"></i><svg class="ic"><use href="#listr"/></svg><svg class="ic"><use href="#sigma"/></svg><i class="w2"></i><svg class="ic"><use href="#grid4"/></svg><i class="dd"></i>
        <i class="grip w9"></i>
        <svg class="ic"><use href="#mac1"/></svg><svg class="ic"><use href="#mac2"/></svg><svg class="ic"><use href="#mac3"/></svg><svg class="ic"><use href="#mac4"/></svg><svg class="ic"><use href="#info"/></svg>
    </div>

    <div class="row">
        <i class="grip w9"></i><i class="w7"></i>
        <svg class="ic"><use href="#wrench"/></svg><i class="w3"></i><svg class="ic"><use href="#xcut"/></svg><i class="dd"></i>
        <i class="grip w12"></i>
        <svg class="ic"><use href="#plus"/></svg><i class="dd"></i>
        <svg class="ic"><use href="#line"/></svg><i class="dd"></i>
        <svg class="ic"><use href="#circ"/></svg><i class="dd"></i>
        <svg class="ic"><use href="#rect"/></svg><i class="dd"></i>
        <svg class="ic"><use href="#fil"/></svg><i class="dd"></i>
        <svg class="ic"><use href="#spl"/></svg><i class="dd"></i>
        <svg class="ic"><use href="#cyl"/></svg><i class="dd"></i>
        <svg class="ic"><use href="#surf"/></svg><i class="dd"></i>
        <i class="grip w11"></i>
        <svg class="ic"><use href="#ws1"/></svg><svg class="ic"><use href="#ws2"/></svg><svg class="ic"><use href="#ws3"/></svg><svg class="ic"><use href="#ws4"/></svg><svg class="ic"><use href="#scale"/></svg><svg class="ic"><use href="#grow"/></svg><svg class="ic"><use href="#two"/></svg><svg class="ic"><use href="#cube3d"/></svg>
        <i class="sep w9"></i>
        <svg class="ic"><use href="#angle"/></svg><i class="dd"></i>
        <svg class="ic"><use href="#dots9"/></svg><svg class="ic"><use href="#boxar"/></svg><i class="dd"></i>
        <i class="grip w9"></i>
        <svg class="ic"><use href="#bulb"/></svg><svg class="ic"><use href="#note"/></svg>
        <i class="sep w9"></i>
        <svg class="ic"><use href="#dimh"/></svg><i class="dd"></i>
        <i class="w1"></i><svg class="ic"><use href="#dimv"/></svg><i class="dd"></i>
        <i class="sep w7"></i>
        <svg class="ic"><use href="#hatch"/></svg><i class="dd"></i>
        <i class="grip w10"></i>
        <svg class="ic"><use href="#wf1"/></svg><svg class="ic"><use href="#wf2"/></svg><i class="w1"></i><svg class="ic"><use href="#dome"/></svg><svg class="ic"><use href="#tile"/></svg><svg class="ic"><use href="#cylup"/></svg><i class="dd"></i>
        <i class="sep w7"></i>
        <svg class="ic"><use href="#sel1"/></svg><svg class="ic"><use href="#sel2"/></svg><svg class="ic"><use href="#mesh"/></svg>
        <i class="sep w9"></i>
        <svg class="ic"><use href="#tow1"/></svg><i class="dd"></i>
        <svg class="ic"><use href="#tow2"/></svg><i class="dd"></i>
        <svg class="ic"><use href="#tow3"/></svg><i class="dd"></i>
    </div>

    <div class="row row3">
        <i class="grip w9"></i>
        <b class="axis">X</b>
        <div class="field"><span>-78.37254</span><i class="fdd"></i></div>
        <b class="axis axis-wide">Y</b>
        <div class="field"><span>49.38146</span><i class="fdd"></i></div>
        <b class="axis">Z</b>
        <i class="w1"></i>
        <div class="field"><span>0.0</span><i class="fdd"></i></div>
        <i class="w3"></i>
        <svg class="ic"><use href="#boltp"/></svg><svg class="ic"><use href="#cogp"/></svg><svg class="ic"><use href="#xstar"/></svg><i class="dd"></i><svg class="ic"><use href="#help"/></svg>
        <i class="grip w16"></i>
        <svg class="ic"><use href="#sbox"/></svg>
        <i class="sep w7"></i>
        <svg class="ic"><use href="#stack"/></svg>
        <i class="sep w7"></i>
        <svg class="ic"><use href="#swap"/></svg>
        <i class="sep w9"></i>
        <svg class="ic"><use href="#dots"/></svg><i class="dd"></i>
        <i class="sep w7"></i>
        <svg class="ic"><use href="#dashr"/></svg><i class="dd"></i>
        <svg class="ic"><use href="#arrow"/></svg><svg class="ic"><use href="#dimbox"/></svg>
        <i class="sep w8"></i>
        <svg class="ic"><use href="#hbox1"/></svg><svg class="ic"><use href="#hbox2"/></svg><svg class="ic"><use href="#hbox3"/></svg>
        <i class="sep w6"></i>
        <svg class="ic on"><use href="#half"/></svg><svg class="ic"><use href="#bkarr"/></svg>
        <i class="sep w7"></i>
        <svg class="ic on"><use href="#target"/></svg><svg class="ic"><use href="#clip"/></svg>
        <i class="sep w8"></i>
        <svg class="ic"><use href="#stop"/></svg><svg class="ic"><use href="#ok"/></svg><svg class="ic"><use href="#help"/></svg>
    </div>

    <div class="middle">
        <aside class="sidebar">
            <i class="vgrip"></i>
            <svg class="vic"><use href="#lboxup"/></svg><svg class="vic"><use href="#lrot"/></svg><svg class="vic"><use href="#lsweep"/></svg><svg class="vic"><use href="#ltool"/></svg>
            <i class="vsep"></i>
            <svg class="vic"><use href="#lbox"/></svg><i class="varr"></i>
            <svg class="vic"><use href="#ldraft"/></svg><i class="varr"></i>
            <i class="vsep"></i>
            <svg class="vic"><use href="#lcube"/></svg><svg class="vic"><use href="#lcube2"/></svg><svg class="vic"><use href="#lplate"/></svg><i class="varr"></i>
            <i class="vsep"></i>
            <svg class="vic"><use href="#lup"/></svg><svg class="vic"><use href="#lbb"/></svg><i class="varr"></i>
            <svg class="vic"><use href="#lframe"/></svg><i class="varr"></i>
            <svg class="vic"><use href="#lmesh"/></svg><svg class="vic"><use href="#lmag"/></svg><svg class="vic"><use href="#lview"/></svg>
            <i class="vgrip"></i>
            <svg class="vic"><use href="#lchk"/></svg><svg class="vic"><use href="#lroof"/></svg><svg class="vic"><use href="#lsplit"/></svg>
            <i class="vsep"></i>
            <svg class="vic"><use href="#lpen"/></svg><svg class="vic"><use href="#lpen2"/></svg><svg class="vic"><use href="#lbx"/></svg>
            <i class="vsep"></i>
            <svg class="vic chev"><use href="#chev"/></svg>
        </aside>

        <div class="center">
            <div class="ribbon"><span>Ribbon Bar</span></div>
            <div class="work">
                <section class="panel">
                    <div class="panelhead">
                        <h2>Toolpaths</h2>
                        <div class="panelbtns">
                            <i class="pdown"></i>
                            <svg class="pin" viewBox="0 0 10 10"><path d="M3 1h4v5H3zM1 6h8M5 6v4M6 1v5" fill="none" stroke="#666"/></svg>
                            <svg class="px" viewBox="0 0 10 10"><path d="M1 1l8 8M9 1L1 9" stroke="#555" stroke-width="1.300"/></svg>
                        </div>
                    </div>
                    <div class="ptools">
                        <svg class="ic"><use href="#tplay"/></svg><svg class="ic"><use href="#tx"/></svg>
                        <i class="sep w8"></i>
                        <svg class="ic"><use href="#ttool"/></svg><svg class="ic"><use href="#ttoolx"/></svg>
                        <i class="sep w8"></i>
                        <svg class="ic"><use href="#wave"/></svg><svg class="ic"><use href="#tcube"/></svg><svg class="ic"><use href="#wavec"/></svg><span class="g1">G1</span><svg class="ic"><use href="#tool2"/></svg>
                        <i class="sep w7"></i>
                        <svg class="ic"><use href="#hook"/></svg>
                        <i class="sep w8"></i>
                        <svg class="ic"><use href="#help"/></svg>
                    </div>
                    <div class="ptools">
                        <svg class="ic"><use href="#lock"/></svg><svg class="ic"><use href="#waves"/></svg><svg class="ic"><use href="#ghost"/></svg>
                        <i class="sep w8"></i>
                        <svg class="ic"><use href="#tridn"/></svg><svg class="ic"><use href="#triup"/></svg><svg class="ic"><use href="#loop"/></svg><svg class="ic"><use href="#updn"/></svg>
                        <i class="sep w7"></i>
                        <svg class="ic"><use href="#wavar"/></svg><svg class="ic"><use href="#cbox"/></svg><svg class="ic"><use href="#step"/></svg>
                        <i class="sep w7"></i>
                        <svg class="ic"><use href="#macb"/></svg><svg class="ic"><use href="#ball"/></svg>
                    </div>
                    <div class="listbox"></div>
                    <div class="tabs">
                        <a class="tab active">Toolpaths</a><a class="tab">Solids</a>
                    </div>
                </section>

                <section class="view">
                    <svg class="canvas" viewBox="365 156 893 515">
                        <defs>
                            <linearGradient id="bg" x1="0" y1="0" x2="0" y2="1">
                                <stop offset="0" stop-color="#98a3ad"/>
                                <stop offset="0.3" stop-color="#b8c0c8"/>
                                <stop offset="0.6" stop-color="#e0e3e6"/>
                                <stop offset="0.85" stop-color="#f3f4f5"/>
                                <stop offset="1" stop-color="#fbfbfb"/>
                            </linearGradient>
                            <linearGradient id="metal" x1="0" y1="0" x2="0" y2="1">
                                <stop offset="0" stop-color="#555"/>
                                <stop offset="0.35" stop-color="#636363"/>
                                <stop offset="0.65" stop-color="#404040"/>
                                <stop offset="0.86" stop-color="#303030"/>
                                <stop offset="1" stop-color="#3c3c3c"/>
                            </linearGradient>
                            <linearGradient id="neck" x1="0" y1="0" x2="0" y2="1">
                                <stop offset="0" stop-color="#666"/>
                                <stop offset="0.25" stop-color="#4a4a4a"/>
                                <stop offset="0.6" stop-color="#2e2e2e"/>
                                <stop offset="1" stop-color="#3d3d3d"/>
                            </linearGradient>
                        </defs>
                        <rect x="365" y="156" width="893" height="515" fill="url(#bg)"/>
                        <path d="M365 444.500H1258M1043 156V671" stroke="#8c9298"/>
                        <path d="M462 328H636.500V560H462z" fill="url(#metal)"/>
                        <path d="M636.500 328L752.500 357V531L636.500 560z" fill="url(#metal)"/>
                        <path d="M752.500 357L781 387V502L752.500 531z" fill="url(#neck)"/>
                        <path d="M781 387L955 415V473L781 502z" fill="url(#metal)"/>
                        <path d="M955 415L1041 444.500L955 473z" fill="url(#metal)"/>
                        <path d="M636.500 328V560M752.500 357V531M781 387V502M955 415V473M462 328V560" stroke="#111" fill="none"/>
                        <path d="M462 328H636.500L752.500 357L781 387L955 415L1041 444.500" stroke="#33356b" fill="none"/>

                        <path d="M417 617V590" stroke="#1d8a3c" stroke-width="1.500"/>
                        <path d="M417 584l-3 10h6z" fill="#11752e"/>
                        <path d="M417 617.500H442" stroke="#a52a22" stroke-width="1.500"/>
                        <path d="M449 617.500l-11-3v6z" fill="#8a1f18"/>
                        <text x="417" y="581" class="axis-y">Y</text>
                        <text x="457" y="620" class="axis-x">X</text>
                        <text x="383" y="659" class="vlabel">Top</text>

                        <path d="M1147 637V658M1237 637V658" stroke="#555" stroke-width="1.500"/>
                        <path d="M1147 647H1237" stroke="#222"/>
                        <text x="1192" y="646" class="scale">15.508 mm</text>
                        <text x="1192" y="658" class="scale">Metric</text>
                    </svg>
                    <div class="sheets"><a class="sheet">Main Viewsheet</a></div>
                </section>
            </div>
        </div>

        <aside class="rightbar">
            <i class="vgrip"></i>
            <svg class="ric"><use href="#rd"/><use href="#bolt"/></svg>
            <svg class="ric"><use href="#surf"/><use href="#bolt"/></svg>
            <svg class="ric"><use href="#rp"/><use href="#bolt"/></svg>
            <svg class="ric"><use href="#line"/><use href="#bolt"/></svg>
            <svg class="ric"><use href="#circ"/><use href="#bolt"/></svg>
            <svg class="ric"><use href="#spl"/><use href="#bolt"/></svg>
            <svg class="ric"><use href="#wave"/><use href="#bolt"/></svg>
            <svg class="ric"><use href="#lcube"/><use href="#bolt"/></svg>
            <svg class="ric"><use href="#mesh"/><use href="#bolt"/></svg>
            <svg class="ric"><use href="#stop"/></svg>
            <i class="vsep"></i>
            <svg class="ric"><use href="#rs"/><use href="#bolt"/></svg>
            <svg class="ric"><use href="#rl"/><use href="#bolt"/></svg>
            <svg class="ric"><use href="#rl"/><use href="#bolt"/></svg>
            <i class="vsep"></i>
            <svg class="ric"><use href="#rg"/><use href="#bolt"/></svg>
            <svg class="ric"><use href="#rlay"/><use href="#bolt"/></svg>
            <svg class="ric"><use href="#stop"/><use href="#bolt"/></svg>
            <i class="vsep big"></i>
            <i class="vgrip"></i>
            <svg class="ric"><use href="#cube1"/></svg>
            <svg class="ric"><use href="#lrot"/></svg>
            <svg class="ric"><use href="#rlay"/></svg>
            <svg class="ric"><use href="#cube4"/></svg>
            <svg class="ric"><use href="#wrench"/></svg>
            <svg class="ric"><use href="#pen"/></svg>
            <svg class="ric"><use href="#line"/></svg>
            <svg class="ric"><use href="#two"/></svg>
            <svg class="ric rchev"><use href="#chev"/></svg>
        </aside>
    </div>

    <footer class="status">
        <span class="wcs">WCS: Top&nbsp; T/Cplane: Top</span>
        <div class="controls">
            <a class="sb w22">3D</a>
            <a class="sb w41">Gview</a>
            <a class="sb w39">WCS</a>
            <a class="sb w35">Planes</a>
            <a class="sb zlabel">Z</a>
            <div class="combo zbox"><span>0.0</span><i class="chevdn"></i></div>
            <a class="sb swatch first"><svg class="swic"><use href="#pgb"/></svg><i class="navy"></i></a>
            <a class="sb swatch"><svg class="swic"><use href="#pgc"/></svg><i class="gray"></i></a>
            <a class="sb swatch"><svg class="swic"><use href="#pgd"/></svg><i class="orange"></i></a>
            <a class="sb levellabel">Level</a>
            <div class="combo levelbox"><span>2 : 3D</span><i class="chevdn"></i></div>
            <a class="sb w56">Attributes</a>
            <a class="sb w34"><svg class="swic"><use href="#starw"/></svg><i class="dd"></i></a>
            <a class="sb w53"><i class="lthick"></i><i class="dd"></i></a>
            <a class="sb w57"><i class="lthin"></i><i class="dd"></i></a>
            <a class="sb w50">Groups</a>
            <a class="sb w10">?</a>
        </div>
    </footer>
</div>
</body>
</html>
```

FILE: styles.css
```css
html, body {
    margin: 0;
    padding: 0;
    height: 720px;
    overflow: hidden;
    background: #000;
}

body {
    font-family: "Open Sans", "Liberation Sans", sans-serif;
    color: #444;
}

i {
    display: block;
    flex: none;
}

.defs {
    display: none;
}

.window {
    margin-left: 7px;
    width: 1273px;
    height: 718px;
    background: #f0f0f0;
    display: flex;
    flex-direction: column;
    overflow: hidden;
}

.titlebar {
    height: 20px;
    display: flex;
    align-items: center;
    flex: none;
}

.logo {
    width: 16px;
    height: 16px;
    margin: 0 5px 0 3px;
}

.title {
    font-size: 10.5px;
    color: #555;
}

.winbtns {
    margin-left: auto;
    display: flex;
    align-items: center;
    padding-right: 1px;
}

.wmin {
    width: 6px;
    height: 2px;
    margin: 4px 20px 0 0;
    background: #555;
}

.wmax {
    width: 5px;
    height: 5px;
    border: 1px solid #666;
    margin-right: 17px;
    box-shadow: 2px -2px 0 -1px #f0f0f0, 2px -2px 0 0 #666;
}

.wclose {
    width: 9px;
    height: 9px;
}

.menu {
    height: 23px;
    flex: none;
    display: flex;
    align-items: center;
    padding-left: 8px;
}

.menu a {
    font-size: 10.2px;
    color: #3c3c3c;
    padding: 3px 6.75px;
    white-space: nowrap;
}

.menu a.active {
    background: #e5e5e5;
}

.row {
    height: 24px;
    flex: none;
    display: flex;
    align-items: center;
}

.row3 {
    margin: 2px 0 3px;
}

.ic {
    width: 18px;
    height: 18px;
    margin: 0 1.300px;
    flex: none;
    filter: blur(0.4px);
    opacity: 0.92;
}

.ic.on {
    background: #dcdcdc;
    box-shadow: 0 0 0 2px #dcdcdc;
}

.ictext {
    font-family: "Liberation Sans", sans-serif;
    font-size: 12px;
    font-weight: bold;
    fill: #556;
}

.ictext.sig {
    font-size: 11px;
    fill: #333;
}

.ictext.hw {
    fill: #fff;
}

.w1 { width: 1px; }
.w2 { width: 2px; }
.w3 { width: 3px; }
.w6 { width: 6px; }
.w7 { width: 7px; }
.w8 { width: 8px; }
.w9 { width: 9px; }
.w10 { width: 10px; }
.w11 { width: 11px; }
.w12 { width: 12px; }
.w14 { width: 14px; }
.w16 { width: 16px; }

.grip, .sep {
    height: 20px;
    position: relative;
}

.grip::after {
    content: "";
    position: absolute;
    left: 50%;
    top: 1px;
    bottom: 1px;
    border-left: 1px dotted #bdbdbd;
}

.sep::after {
    content: "";
    position: absolute;
    left: 50%;
    top: 0;
    bottom: 0;
    border-left: 1px solid #d2d2d2;
}

.dd {
    width: 12px;
    height: 10px;
    position: relative;
}

.dd::after {
    content: "";
    position: absolute;
    left: 2px;
    top: 4px;
    border: 3px solid transparent;
    border-top-color: #777;
    border-bottom: 0;
}

.axis {
    width: 24px;
    text-align: center;
    font-size: 15px;
    font-family: "Liberation Sans", sans-serif;
    color: #666;
    flex: none;
}

.axis.axis-wide {
    width: 26px;
}

.row3 .grip + .axis {
    width: 22px;
    margin-right: 2px;
}

.field {
    width: 134px;
    height: 17px;
    flex: none;
    background: #f5f5f5;
    border: 1px solid #bdbdbd;
    display: flex;
    align-items: center;
    justify-content: space-between;
    padding: 0;
    font-size: 10px;
    color: #666;
}

.field span {
    padding-left: 4px;
}

.fdd {
    width: 0;
    height: 0;
    margin-right: 4px;
    border: 3px solid transparent;
    border-top-color: #aaa;
    border-bottom: 0;
}

.middle {
    flex: 1;
    display: flex;
    min-height: 0;
}

.sidebar {
    width: 25px;
    flex: none;
    display: flex;
    flex-direction: column;
    align-items: center;
}

.rightbar {
    width: 22px;
    flex: none;
    display: flex;
    flex-direction: column;
    padding-left: 5px;
    box-sizing: border-box;
    overflow: hidden;
}

.vic, .ric {
    flex: none;
    width: 18px;
    height: 18px;
    margin: 1.400px 0;
    filter: blur(0.4px);
}

.ric.rchev {
    margin-top: 2px;
    margin-left: 2px;
}

.vic.chev {
    margin: 3px 0 0 8px;
}

.vgrip {
    height: 10px;
    width: 16px;
    position: relative;
}

.vgrip::after {
    content: "";
    position: absolute;
    left: 1px;
    right: 1px;
    top: 4px;
    border-top: 1px dotted #bdbdbd;
}

.vsep {
    height: 6px;
    width: 22px;
    position: relative;
}

.vsep::after {
    content: "";
    position: absolute;
    left: 0;
    right: 0;
    top: 3px;
    border-top: 1px solid #d8d8d8;
}

.vsep.big {
    height: 22px;
}

.varr {
    width: 12px;
    height: 13px;
    position: relative;
}

.varr::after {
    content: "";
    position: absolute;
    left: 5px;
    top: 3px;
    border: 3px solid transparent;
    border-left-color: #999;
    border-right: 0;
}

.center {
    flex: 1;
    min-width: 0;
    display: flex;
    flex-direction: column;
}

.ribbon {
    height: 33px;
    flex: none;
    border-bottom: 3px solid #e8e8e8;
    box-sizing: content-box;
    padding-left: 176px;
    font-family: "Liberation Sans", sans-serif;
    font-size: 10.500px;
    letter-spacing: -0.200px;
    color: #333;
    line-height: 32px;
}

.work {
    flex: 1;
    min-height: 0;
    display: flex;
    gap: 5px;
}

.panel {
    width: 328px;
    flex: none;
    display: flex;
    flex-direction: column;
}

.panelhead {
    height: 32px;
    display: flex;
    align-items: center;
    justify-content: space-between;
    padding: 0 4px 0 3px;
    flex: none;
}

.panelhead h2 {
    margin: 0;
    font-size: 16.5px;
    font-weight: normal;
    color: #555;
    line-height: 34px;
}

.panelbtns {
    display: flex;
    align-items: center;
    gap: 7px;
}

.pdown {
    width: 0;
    height: 0;
    border: 4px solid transparent;
    border-top-color: #666;
    border-bottom: 0;
}

.pin, .px {
    width: 9px;
    height: 9px;
}

.ptools {
    height: 23px;
    flex: none;
    display: flex;
    align-items: center;
    padding-left: 1px;
}

.ptools .ic {
    opacity: 0.7;
}

.g1 {
    width: 20.600px;
    text-align: center;
    font-size: 10px;
    color: #9db4c8;
    flex: none;
}

.listbox {
    margin: 5px 1px 0;
    height: 411px;
    flex: none;
    background: #fff;
    border: 1px solid #cfcfcf;
}

.tabs {
    margin: 21px 0 0 -1px;
    height: 22px;
    flex: none;
    display: flex;
    border-top: 1px solid #dcdcdc;
    font-size: 10.200px;
}

.tab {
    padding: 3px 5px 0;
    color: #444;
    line-height: 15px;
}

.tab.active {
    background: #fff;
    color: #666;
    width: 48px;
    margin-top: -1px;
    border-left: 1px solid #dcdcdc;
    border-right: 1px solid #dcdcdc;
}

.tab:not(.active) {
    padding-left: 6px;
}

.view {
    flex: 1;
    min-width: 0;
    display: flex;
    flex-direction: column;
}

.canvas {
    display: block;
    width: 893px;
    height: 515px;
    flex: none;
}

.axis-y, .axis-x {
    font-family: "DejaVu Sans", sans-serif;
    font-weight: bold;
    font-size: 10px;
    text-anchor: middle;
}

.axis-y { fill: #2fae55; }
.axis-x { fill: #c8423a; }

.vlabel {
    font-family: "DejaVu Sans", sans-serif;
    font-weight: bold;
    font-size: 11px;
    fill: #222;
}

.scale {
    font-family: "DejaVu Sans", sans-serif;
    font-weight: bold;
    font-size: 10.500px;
    text-anchor: middle;
    fill: #222;
}

.sheets {
    flex: 1;
    border-top: 1px solid #dcdcdc;
    margin-top: 3px;
    display: flex;
    align-items: flex-end;
}

.sheet {
    background: #fff;
    font-size: 10.500px;
    color: #666;
    height: 19px;
    line-height: 19px;
    width: 86px;
    text-align: center;
    margin-left: -1px;
    white-space: nowrap;
}

.status {
    height: 23px;
    flex: none;
    background: #555;
    display: flex;
    align-items: center;
    justify-content: space-between;
}

.wcs {
    font-size: 10.200px;
    color: #e4e4e4;
    padding-left: 3px;
}

.controls {
    display: flex;
    height: 21px;
    margin-top: 2px;
    gap: 3px;
    font-size: 10.500px;
    letter-spacing: -0.500px;
    width: 733px;
    overflow: hidden;
    flex: none;
}

.sb {
    background: #efefef;
    color: #555;
    display: flex;
    align-items: center;
    justify-content: center;
    flex: none;
}

.sb.w10 { width: 10px; }
.w22 { width: 22px; }
.w34 { width: 34px; }
.w35 { width: 35px; }
.w39 { width: 39px; }
.w41 { width: 41px; }
.w50 { width: 50px; }
.w53 { width: 53px; }
.w56 { width: 56px; }
.w57 { width: 57px; }

.zlabel {
    width: 9px;
    margin-right: -1px;
}

.combo {
    background: #fff;
    display: flex;
    align-items: center;
    justify-content: space-between;
    box-sizing: border-box;
    padding: 0 6px 0 4px;
    flex: none;
    color: #333;
}

.zbox {
    width: 75px;
    margin-left: 1px;
    background: linear-gradient(to right, #fdf46a 0 58px, #fff 58px);
}

.levelbox {
    width: 93px;
    margin-left: -3px;
}

.chevdn {
    width: 5px;
    height: 5px;
    border-right: 1px solid #777;
    border-bottom: 1px solid #777;
    transform: rotate(45deg) translate(-1px, -1px);
}

.swatch {
    width: 28px;
    flex-direction: column;
    justify-content: flex-end;
    padding-bottom: 2px;
    box-sizing: border-box;
}

.swatch.first {
    margin-left: 2px;
}

.swic {
    width: 13px;
    height: 13px;
    flex: none;
}

.swatch i {
    width: 28px;
    height: 5px;
}

.navy { background: #0c1c78; }
.gray { background: #8a8a8a; }
.orange { background: #e88f4a; }

.levellabel {
    width: 28px;
}

.lthick {
    width: 36px;
    height: 3px;
    background: #000;
}

.lthin {
    width: 40px;
    height: 1px;
    background: #000;
}
```
